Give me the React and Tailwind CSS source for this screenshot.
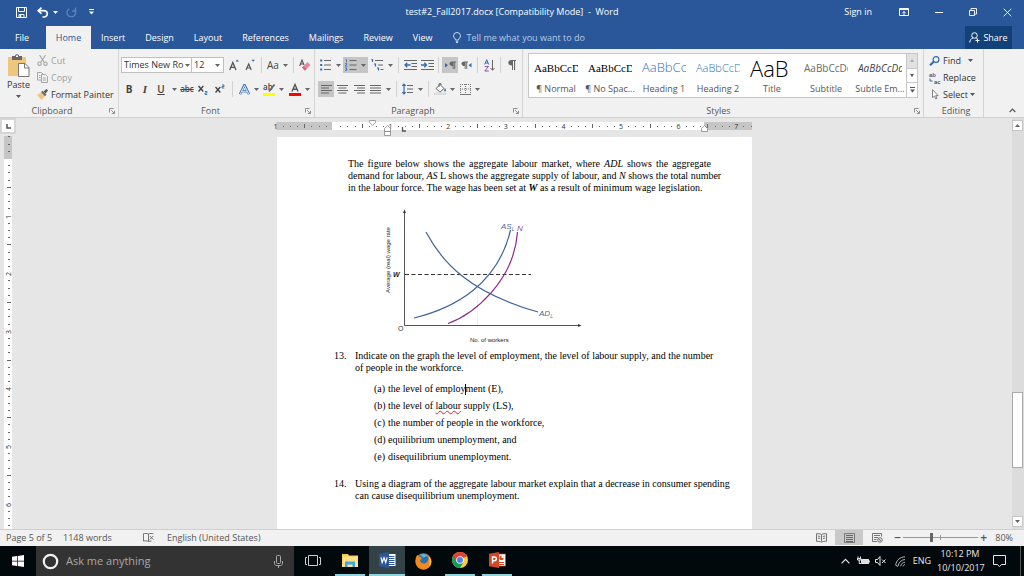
import React from "react";

const UI = "font-['Open_Sans','Noto_Sans',sans-serif]";

/* ---------- small shared pieces ---------- */

function Caret({ label, className = "w-[9px]" }) {
  return (
    <button aria-label={label} className={`flex h-4 shrink-0 items-center justify-center ${className}`}>
      <svg width="5" height="3" viewBox="0 0 5 3"><path d="M0 0h5L2.5 3z" fill="#666" /></svg>
    </button>
  );
}

function Tool({ label, className = "w-4", children }) {
  return (
    <button aria-label={label} className={`flex h-4 shrink-0 items-center justify-center ${className}`}>
      {children}
    </button>
  );
}

function Divider() {
  return <div className="mx-[3px] h-4 w-px shrink-0 bg-[#d2d2d2]" />;
}

function Launcher() {
  return (
    <button aria-label="More settings" className="absolute right-[3px] bottom-[3px]">
      <svg width="6" height="6" viewBox="0 0 6 6" fill="none" stroke="#777" strokeWidth=".8">
        <path d="M.5 4.5v-4h4M2.2 2.2l3 3M5.5 2.8v2.7H2.8" />
      </svg>
    </button>
  );
}

function Group({ title, className, launcher = true, children }) {
  return (
    <section aria-label={title} className={`relative flex shrink-0 flex-col border-r border-[#d4d4d4] ${className}`}>
      <div className="flex-1">{children}</div>
      <div className={`text-center leading-[13px] text-[#555] ${launcher ? "pr-[14px]" : ""}`}>{title}</div>
      {launcher && <Launcher />}
    </section>
  );
}

/* ---------- title bar and tabs ---------- */

function TitleBar() {
  return (
    <header className="grid h-[26px] shrink-0 grid-cols-[1fr_auto_1fr] items-center pb-[2px] text-white">
      <div className="flex items-center pl-4">
        <button aria-label="Save">
          <svg width="11" height="11" viewBox="0 0 11 11" fill="none" stroke="#fff">
            <path d="M.5.5h10v10H.5z" /><path d="M2.5.5v4h6v-4" /><path d="M3 10.5V7.5h5v3" /><path d="M4.5 8v2" strokeWidth="1.5" />
          </svg>
        </button>
        <button aria-label="Undo" className="ml-[10px]">
          <svg width="12" height="11" viewBox="0 0 12 11" fill="none" stroke="#fff" strokeWidth="1.7">
            <path d="M4.5.7L1.2 3.7l3.3 3" /><path d="M1.2 3.7h5.3c5 0 5 6.3.3 6.3H5.5" />
          </svg>
        </button>
        <button aria-label="Undo history" className="ml-1">
          <svg width="5" height="3" viewBox="0 0 5 3"><path d="M0 0h5L2.5 3z" fill="#fff" /></svg>
        </button>
        <button aria-label="Repeat" className="ml-2">
          <svg width="11" height="11" viewBox="0 0 11 11" fill="none" stroke="#5f83bb" strokeWidth="1.3">
            <path d="M3.3 1.7A4.3 4.3 0 1 0 8.5 2.6" /><path d="M6 4.2h3.6V.6" />
          </svg>
        </button>
        <button aria-label="Customize toolbar" className="ml-3">
          <svg width="5" height="6" viewBox="0 0 5 6" fill="#fff"><path d="M0 0h5v1H0zM0 2.6h5L2.5 5.6z" /></svg>
        </button>
      </div>
      <h1 className="text-[9px] whitespace-pre">test#2_Fall2017.docx [Compatibility Mode]  -  Word</h1>
      <div className="flex items-center justify-end pr-3">
        <button>Sign in</button>
        <button aria-label="Ribbon display options" className="ml-[27px]">
          <svg width="10" height="8" viewBox="0 0 10 8" fill="none" stroke="#fff">
            <path d="M.5.5h9v7h-9zM.5 1.5h9" /><path d="M5 7V3.5M3.3 5L5 3.5 6.7 5" strokeWidth=".9" />
          </svg>
        </button>
        <button aria-label="Minimize" className="ml-[26px]">
          <svg width="8" height="8" viewBox="0 0 8 8"><path d="M0 4h8v1H0z" fill="#fff" /></svg>
        </button>
        <button aria-label="Restore" className="ml-[26px]">
          <svg width="8" height="8" viewBox="0 0 8 8" fill="none" stroke="#fff" strokeWidth=".9">
            <path d="M.5 2.5h5v5h-5zM2 2.3V.5h5.5V6H5.8" />
          </svg>
        </button>
        <button aria-label="Close" className="ml-[26px]">
          <svg width="9" height="9" viewBox="0 0 9 9" stroke="#fff" strokeWidth=".9"><path d="M.7.7l7.6 7.6M8.3.7L.7 8.3" /></svg>
        </button>
      </div>
    </header>
  );
}

const tabs = ["Insert", "Design", "Layout", "References", "Mailings", "Review", "View"];

function Tabs() {
  return (
    <nav className="flex h-[23px] shrink-0 items-stretch text-white">
      <button className="w-[46px] pr-0.5">File</button>
      <button className="w-[45px] bg-[#f1f1f1] text-[#2a579a]">Home</button>
      {tabs.map((t) => <button key={t} className="px-[10px]">{t}</button>)}
      <label className="flex flex-1 items-center pl-[11px]">
        <svg width="8" height="11" viewBox="0 0 8 11" fill="none" stroke="#dbe5f3" strokeWidth=".9">
          <path d="M2.5 8C2.500 6.300.5 6 .5 3.800a3.500 3.300 0 0 1 7 0C7.500 6 5.500 6.300 5.500 8zM2.700 9.300h2.600M3 10.500h2" />
        </svg>
        <input aria-label="Tell me" placeholder="Tell me what you want to do" className="ml-[5px] w-40 bg-transparent outline-none placeholder:text-[#b8cae6]" />
      </label>
      <button className="mr-3 flex w-[47px] items-center justify-center gap-[3px] bg-[#124078]">
        <svg width="11" height="11" viewBox="0 0 11 11" fill="none" stroke="#fff">
          <circle cx="5.500" cy="3.500" r="2.800" /><path d="M.700 10.500c.3-2.500 1.600-4.200 3.300-4.700M6.800 6l.9.800M8.500 6.500v4M6.500 8.500h4" />
        </svg>
        Share
      </button>
    </nav>
  );
}

/* ---------- ribbon ---------- */

function ClipboardGroup() {
  return (
    <Group title="Clipboard" className="w-[119px]">
      <div className="flex pt-[3px]">
        <button className="flex w-[37px] flex-col items-center pt-[2px] text-[#333]">
          <svg width="23" height="24" viewBox="0 0 23 24">
            <path d="M1 3h18v19H1z" fill="#eec77c" />
            <path d="M5 2h3c0-2.500 4-2.500 4 0h3v4H5z" fill="#666" /><path d="M9 1.500h2v1.500H9z" fill="#fff" />
            <path d="M11.500 9.500h6.500l4 4v9H11.500z" fill="#fff" stroke="#777" /><path d="M17.500 9.500v4.500h4.500" fill="none" stroke="#777" />
          </svg>
          <span className="leading-[14px]">Paste</span>
          <svg className="mt-[3px]" width="5" height="3" viewBox="0 0 5 3"><path d="M0 0h5L2.500 3z" fill="#555" /></svg>
        </button>
        <div className="flex flex-col items-start text-[#a0a0a0]">
          <button className="flex h-[17px] items-center gap-[3px]">
            <svg width="11" height="11" viewBox="0 0 11 11" fill="none" stroke="#a6a6a6" strokeWidth="1.100">
              <path d="M2.500 0l4.600 7M8.500 0L3.900 7" /><circle cx="2.500" cy="8.700" r="1.700" /><circle cx="8.500" cy="8.700" r="1.700" />
            </svg>
            Cut
          </button>
          <button className="flex h-[17px] items-center gap-[3px]">
            <svg width="11" height="11" viewBox="0 0 11 11" fill="#f1f1f1" stroke="#a6a6a6">
              <path d="M.5.5h4l2 2v5.500h-6z" /><path d="M4.500 2.500h4l2 2v6h-6z" /><path d="M6 6h3M6 8h3M2 3.500h1.500M2 5.500h1.500" />
            </svg>
            Copy
          </button>
          <button className="flex h-[17px] items-center gap-[3px] text-[#333]">
            <svg width="11" height="11" viewBox="0 0 11 11">
              <path d="M0 6l4-2.500L8 7l-3.500 4z" fill="#eec77c" /><path d="M4 3l1.500-1.300 4 4L8 7.200z" fill="#666" /><path d="M6.500 2.500L9.500 0 11 1.500 8.600 4.600z" fill="#555" />
            </svg>
            Format Painter
          </button>
        </div>
      </div>
    </Group>
  );
}

function FontGroup() {
  return (
    <Group title="Font" className="w-[196px] pl-[2px]">
      <div className="mt-2 flex h-4 items-center">
        <div className="flex h-4 w-[71px] items-center border border-[#c0c0c0] bg-white">
          <input aria-label="Font" defaultValue="Times New Ro" className="w-[62px] pl-[2px] text-[#333] outline-none" />
          <Caret label="Font list" className="w-[7px]" />
        </div>
        <div className="flex h-4 w-8 items-center border border-l-0 border-[#c0c0c0] bg-white">
          <input aria-label="Font size" defaultValue="12" className="w-[21px] pl-[2px] text-[#333] outline-none" />
          <Caret label="Font size list" />
        </div>
        <Tool label="Grow font" className="ml-[2px] w-4">
          <svg width="10" height="12" viewBox="0 0 10 12"><path d="M.7 11L3.800 3.500 7 11M1.900 8.300h3.800" fill="none" stroke="#555" strokeWidth="1.300" /><path d="M6.500 2.500h3.500L8.200.5z" fill="#2f6bb0" /></svg>
        </Tool>
        <Tool label="Shrink font">
          <svg width="10" height="12" viewBox="0 0 10 12"><path d="M1 11L3.700 5l2.600 6M2 9h3.300" fill="none" stroke="#555" strokeWidth="1.200" /><path d="M6.500.7h3.500L8.200 2.700z" fill="#2f6bb0" /></svg>
        </Tool>
        <Divider />
        <Tool label="Change case" className="w-4 text-[10px] text-[#444]">Aa</Tool>
        <Caret label="Change case options" />
        <Divider />
        <Tool label="Clear formatting">
          <svg width="12" height="12" viewBox="0 0 12 12"><path d="M.7 7L3 1l2 5M1.500 5h3" fill="none" stroke="#555" strokeWidth="1.100" /><path d="M3 8.500L8.500 3 11.500 6 6 11.500z" fill="#e58a9a" /><path d="M4.500 7l3 3-1.500 1.500-3-3z" fill="#d8637a" /></svg>
        </Tool>
      </div>
      <div className="mt-2 flex h-4 items-center text-[#444]">
        <Tool label="Bold"><b className="text-[10px]">B</b></Tool>
        <Tool label="Italic"><i className="font-['Liberation_Serif',serif] text-[11px] font-bold">I</i></Tool>
        <Tool label="Underline"><span className="text-[10px] font-semibold underline">U</span></Tool>
        <Caret label="Underline options" className="w-[10px]" />
        <Tool label="Strikethrough"><span className="text-[8px] font-semibold line-through">abc</span></Tool>
        <Tool label="Subscript">
          <svg width="10" height="11" viewBox="0 0 10 11"><path d="M.5 2l4.800 5.500M5.300 2L.5 7.500" stroke="#444" strokeWidth="1.400" /><path d="M7 7.500h2V9H7v1.500h2.300" fill="none" stroke="#2f6bb0" strokeWidth=".9" /></svg>
        </Tool>
        <Tool label="Superscript" className="w-[18px]">
          <svg width="10" height="11" viewBox="0 0 10 11"><path d="M.5 3l4.800 5.500M5.300 3L.5 8.500" stroke="#444" strokeWidth="1.400" /><path d="M7 1h2v1.500H7V4h2.300" fill="none" stroke="#2f6bb0" strokeWidth=".9" /></svg>
        </Tool>
        <Divider />
        <Tool label="Text effects">
          <svg width="11" height="11" viewBox="0 0 11 11"><path d="M1 10.300L5.500.8 10 10.300M2.800 7.300h5.400" fill="none" stroke="#3f78bd" strokeWidth="2.400" /><path d="M1.300 10L5.500 1.500 9.700 10M2.800 7.300h5.400" fill="none" stroke="#fff" strokeWidth=".8" /></svg>
        </Tool>
        <Caret label="Text effect options" />
        <Tool label="Highlight colour">
          <svg width="13" height="13" viewBox="0 0 13 13"><path d="M0 10h12v3H0z" fill="#ff0" /><text x="0" y="7" fontSize="8" fontWeight="600" fill="#444">ab</text><path d="M6 8.500L11.500 1.500" stroke="#666" strokeWidth="1.800" /></svg>
        </Tool>
        <Caret label="Highlight options" />
        <Tool label="Font colour" className="w-[17px]">
          <svg width="12" height="13" viewBox="0 0 12 13"><path d="M0 10h12v3H0z" fill="#f00" /><path d="M3 8.500L6 1.500l3 7M4 6.300h4" fill="none" stroke="#555" strokeWidth="1.400" /></svg>
        </Tool>
        <Caret label="Font colour options" />
      </div>
    </Group>
  );
}

const lineSets = {
  left: "M0 .5h11M0 3h8M0 5.500h11M0 8h8",
  center: "M0 .5h11M1.500 3h8M0 5.500h11M1.500 8h8",
  right: "M0 .5h11M3 3h8M0 5.500h11M3 8h8",
  justify: "M0 .5h11M0 3h11M0 5.500h11M0 8h11",
};

function Lines({ kind }) {
  return <svg width="11" height="9" viewBox="0 0 11 9"><path d={lineSets[kind]} stroke="#666" strokeWidth="1" /></svg>;
}

function ParagraphGroup() {
  return (
    <Group title="Paragraph" className="w-[208px] pl-[3px]">
      <div className="mt-2 flex h-4 items-center">
        <Tool label="Bullets">
          <svg width="12" height="12" viewBox="0 0 12 12"><path d="M4 1.500h7M4 6h7M4 10.500h7" stroke="#666" /><path d="M.2.500h2v2h-2zM.2 5h2v2h-2zM.2 9.500h2v2h-2z" fill="#2f6bb0" /></svg>
        </Tool>
        <Caret label="Bullet options" />
        <div className="flex bg-[#c5c5c5]">
          <Tool label="Numbering">
            <svg width="12" height="12" viewBox="0 0 12 12" fill="none"><path d="M4.500 1.500h7M4.500 6h7M4.500 10.500h7" stroke="#666" /><path d="M.5.500h1v2.800M0 4.700h2L.3 7.200h2M0 9h2l-1 1 1 .2-.3 1.300H0" stroke="#2f6bb0" strokeWidth=".8" /></svg>
          </Tool>
          <Caret label="Numbering options" />
        </div>
        <Tool label="Multilevel list" className="w-[18px]">
          <svg width="13" height="12" viewBox="0 0 13 12" fill="none"><path d="M4 1.500h8M7 6h5M9.500 10.500h3" stroke="#666" /><path d="M.5.500h1v2.500M3 5h1.500v2.500M6 9h1.500v2.500" stroke="#2f6bb0" strokeWidth="1.200" /></svg>
        </Tool>
        <Caret label="Multilevel options" />
        <Divider />
        <Tool label="Decrease indent" className="w-[17px]">
          <svg width="13" height="10" viewBox="0 0 13 10" fill="none"><path d="M0 .5h13M7.500 3.500H13M7.500 6.500H13M0 9.500h13" stroke="#666" /><path d="M6.500 5H1M3.200 2.700L1 5l2.200 2.300" stroke="#2f6bb0" strokeWidth="1.300" /></svg>
        </Tool>
        <Tool label="Increase indent">
          <svg width="13" height="10" viewBox="0 0 13 10" fill="none"><path d="M0 .5h13M7.500 3.500H13M7.500 6.500H13M0 9.500h13" stroke="#666" /><path d="M0 5h5.500M3.300 2.700L5.500 5 3.300 7.300" stroke="#2f6bb0" strokeWidth="1.300" /></svg>
        </Tool>
        <Divider />
        <Tool label="Left to right" className="w-4 bg-[#c5c5c5]">
          <svg width="11" height="9" viewBox="0 0 11 9"><path d="M0 2l3 2.200L0 6.500z" fill="#2f6bb0" /><path d="M7.200.5H11v.9h-.8V8h-.9V1.400h-.7V8h-.9V5C3.500 5 3.500.5 7.200.5z" fill="#666" /></svg>
        </Tool>
        <Tool label="Right to left">
          <svg width="11" height="9" viewBox="0 0 11 9"><path d="M10.500 2l-3 2.200 3 2.300z" fill="#2f6bb0" /><path d="M3.200.5H7v.9h-.8V8h-.9V1.400h-.7V8h-.9V5C-.5 5-.5.5 3.200.5z" fill="#666" /></svg>
        </Tool>
        <Divider />
        <Tool label="Sort">
          <svg width="11" height="13" viewBox="0 0 11 13" fill="none"><path d="M.7 5.500L2.700.7l2 4.800M1.400 4h2.600" stroke="#2f6bb0" /><path d="M.8 7.500h3.700L.8 12h4" stroke="#8a4fa5" /><path d="M8.500 1v10M6.500 9l2 2.300 2-2.300" stroke="#666" /></svg>
        </Tool>
        <Divider />
        <Tool label="Show marks">
          <svg width="8" height="10" viewBox="0 0 8 10"><path d="M3.500 0H8v1h-.9v9H6V1H5v9H4V5.500C-.8 5.500-.8 0 3.500 0z" fill="#666" /></svg>
        </Tool>
      </div>
      <div className="mt-2 flex h-4 items-center">
        <Tool label="Align left" className="w-4 bg-[#c5c5c5]"><Lines kind="left" /></Tool>
        <Tool label="Center" className="w-[17px]"><Lines kind="center" /></Tool>
        <Tool label="Align right"><Lines kind="right" /></Tool>
        <Tool label="Justify" className="w-[17px]"><Lines kind="justify" /></Tool>
        <Caret label="Justify options" />
        <Divider />
        <Tool label="Line spacing">
          <svg width="12" height="12" viewBox="0 0 12 12" fill="none"><path d="M5 2.500h6M5 6h6M5 9.500h6" stroke="#666" /><path d="M2 1v10M.3 2.800L2 1l1.700 1.800M.3 9.200L2 11l1.700-1.800" stroke="#2f6bb0" strokeWidth="1.200" /></svg>
        </Tool>
        <Caret label="Spacing options" />
        <Divider />
        <Tool label="Shading">
          <svg width="13" height="12" viewBox="0 0 13 12"><path d="M2 5.500L6 1.500l4 4-4 3.700z" fill="#fff" stroke="#666" /><path d="M5 4V.7h2V2" fill="none" stroke="#666" /><path d="M11 5c1.500 2 1 3.500 0 3.500S9.800 7 11 5z" fill="#2f6bb0" /><path d="M.5 10.200h11v1.500H.5z" fill="#fff" stroke="#aaa" strokeWidth=".5" /></svg>
        </Tool>
        <Caret label="Shading options" />
        <Tool label="Borders">
          <svg width="11" height="11" viewBox="0 0 11 11" fill="none" stroke="#777"><path d="M.5 0v10M5.500 0v10M10.500 0v10M0 .5h11M0 5h11" strokeDasharray="1 1" /><path d="M0 10.500h11" /></svg>
        </Tool>
        <Caret label="Border options" />
      </div>
    </Group>
  );
}

const styles = [
  { name: "¶ Normal", sample: "AaBbCcDd", look: "font-['Liberation_Serif',serif] text-[11px] text-black" },
  { name: "¶ No Spac...", sample: "AaBbCcDd", look: "font-['Liberation_Serif',serif] text-[11px] text-black" },
  { name: "Heading 1", sample: "AaBbCcDd", look: "font-light text-[13px] text-[#2e74b5]" },
  { name: "Heading 2", sample: "AaBbCcDd", look: "font-light text-[11px] text-[#2e74b5]" },
  { name: "Title", sample: "AaB", look: "font-light text-[22px] text-black" },
  { name: "Subtitle", sample: "AaBbCcDd", look: "text-[10px] text-[#6a6a6a]" },
  { name: "Subtle Em...", sample: "AaBbCcDd", look: "italic text-[10px] text-[#404040]" },
];

function StylesGroup() {
  return (
    <Group title="Styles" className="min-w-0 flex-1 pl-[5px]">
      <div className="mt-1 mr-[5px] flex h-[45px] border border-[#c6c6c6] bg-white">
        <div className="flex flex-1 overflow-hidden">
          {styles.map((s) => (
            <button key={s.name} className="flex w-[54px] shrink-0 flex-col items-center text-[#555]">
              <span className={`flex h-[28px] w-[44px] items-center overflow-hidden whitespace-nowrap ${s.look}`}>{s.sample}</span>
              <span className="leading-[13px] whitespace-nowrap">{s.name}</span>
            </button>
          ))}
        </div>
        <div className="flex w-[11px] flex-col divide-y divide-[#c6c6c6] border-l border-[#c6c6c6]">
          <button aria-label="Scroll up" className="flex flex-1 items-center justify-center bg-[#e1e1e1]"><svg width="4" height="3" viewBox="0 0 4 3"><path d="M0 3h4L2 0z" fill="#aaa" /></svg></button>
          <button aria-label="Scroll down" className="flex flex-1 items-center justify-center"><svg width="4" height="3" viewBox="0 0 4 3"><path d="M0 0h4L2 3z" fill="#555" /></svg></button>
          <button aria-label="All styles" className="flex flex-1 items-center justify-center"><svg width="5" height="6" viewBox="0 0 5 6"><path d="M0 0h5v1H0zM0 2.500h5L2.500 5.500z" fill="#555" /></svg></button>
        </div>
      </div>
    </Group>
  );
}

function EditingGroup() {
  return (
    <Group title="Editing" className="w-[60px] pl-[5px]" launcher={false}>
      <div className="flex flex-col items-start pt-[3px] text-[#333]">
        <button className="flex h-[17px] items-center gap-[3px]">
          <svg width="11" height="10" viewBox="0 0 11 10" fill="none" stroke="#2f6bb0"><circle cx="7" cy="3.500" r="2.900" strokeWidth="1.200" /><path d="M4.700 5.700L1 9.300" strokeWidth="2" /></svg>
          Find
          <svg className="ml-[4px]" width="5" height="3" viewBox="0 0 5 3"><path d="M0 0h5L2.500 3z" fill="#555" /></svg>
        </button>
        <button className="flex h-[17px] items-center gap-[2px]">
          <svg width="12" height="14" viewBox="0 0 12 14" fontFamily="Liberation Sans, sans-serif" fontSize="6" fontWeight="700"><text x="0" y="5.500" fill="#555">a<tspan fill="#8a4fa5">b</tspan></text><text x="5" y="12.500" fill="#555">a<tspan fill="#2f6bb0">c</tspan></text><path d="M1 7.500V10h2.500" fill="none" stroke="#2f6bb0" /></svg>
          Replace
        </button>
        <button className="flex h-[17px] items-center gap-[3px]">
          <svg width="11" height="11" viewBox="0 0 11 11"><path d="M3.500.7v8l2-1.700 1.300 3 1.200-.6L6.700 6.600h2.500z" fill="#fff" stroke="#777" strokeWidth=".9" /></svg>
          Select
          <svg className="-ml-px" width="5" height="3" viewBox="0 0 5 3"><path d="M0 0h5L2.500 3z" fill="#555" /></svg>
        </button>
      </div>
    </Group>
  );
}

function Ribbon() {
  return (
    <div className="flex h-[69px] shrink-0 border-b border-[#d0d0d0] bg-[#f1f1f1]">
      <ClipboardGroup />
      <FontGroup />
      <ParagraphGroup />
      <StylesGroup />
      <EditingGroup />
      <div className="flex w-10 items-end justify-end pr-2 pb-1">
        <button aria-label="Collapse ribbon"><svg width="7" height="5" viewBox="0 0 7 5"><path d="M.7 4l2.800-2.800L6.300 4" fill="none" stroke="#555" strokeWidth="1.200" /></svg></button>
      </div>
    </div>
  );
}

/* ---------- rulers ---------- */

const INCH = 57.6;

function tickMarks(from, to) {
  const out = [];
  for (let i = from; i <= to; i++) if (i % 8 !== 0) out.push({ i, at: (i * INCH) / 8, half: i % 4 === 0 });
  return out;
}

function HorizontalRuler() {
  return (
    <svg aria-hidden="true" className="mx-auto block shrink-0 overflow-visible" width="477" height="19" viewBox="-57 0 477 19">
      <path d="M-57 4H-1v8h-56z" fill="#c6c6c6" /><path d="M-1 4h372v8H-1z" fill="#fff" /><path d="M371 4h48v8h-48z" fill="#c6c6c6" />
      {tickMarks(-7, 58).map((t) => <rect key={t.i} x={Math.round(t.at)} y={t.half ? 6 : 8} width="1" height={t.half ? 4 : 1} fill="#666" />)}
      {[-1, 1, 2, 3, 4, 5, 6, 7].map((n) => <text key={n} x={n * INCH} y="11" textAnchor="middle" fontSize="7" fill="#333">{Math.abs(n)}</text>)}
      <path d="M36.500 2.500h6v2l-3 3-3-3z" fill="#fff" stroke="#888" strokeWidth=".8" />
      <path d="M51.500 13.500v-3l3-3 3 3v3zM51.500 13.500h6v4h-6z" fill="#fff" stroke="#888" strokeWidth=".8" />
      <path d="M69.500 9v4h3.500" fill="none" stroke="#555" strokeWidth="1.300" />
      <path d="M368.500 13.500v-3l3-3 3 3v3z" fill="#fff" stroke="#888" strokeWidth=".8" />
    </svg>
  );
}

function VerticalRuler() {
  return (
    <svg aria-hidden="true" className="ml-1 block shrink-0" width="8" height="412" viewBox="0 -23 8 412">
      <path d="M0-23h8V0H0z" fill="#c6c6c6" /><path d="M0 0h8v400H0z" fill="#fff" />
      {tickMarks(-3, 60).map((t) => <rect key={t.i} x={t.half ? 3 : 4} y={Math.round(t.at) - 1} width={t.half ? 4 : 2} height="1" fill="#666" />)}
      {[1, 2, 3, 4, 5, 6].map((n) => <text key={n} transform={`translate(7 ${Math.round(n * INCH)}) rotate(-90)`} textAnchor="middle" fontSize="7" fill="#333">{n}</text>)}
    </svg>
  );
}

/* ---------- document ---------- */

function Figure() {
  return (
    <svg role="img" aria-label="Aggregate labour market" className="mt-[6px] ml-9 block" width="220" height="145" viewBox="370 200 220 145" fontFamily="Liberation Sans, sans-serif">
      <path d="M404.500 211v114.500H580" fill="none" stroke="#555" />
      <path d="M403 213l1.500-3.500 1.500 3.500zM578 324l3.500 1.500-3.500 1.500z" fill="#333" />
      <path d="M405 274.500h126" stroke="#333" strokeDasharray="4 2.500" />
      <path d="M477.500 287v38" stroke="#f0f0f0" />
      <g fill="none" strokeWidth="1.200">
        <path d="M426 232C442 262 468 292 538 312" stroke="#3f6496" />
        <path d="M414 318C455 308 498 284 510.500 230" stroke="#3f6496" />
        <path d="M448 323.500C474 314 514 281 517.500 232" stroke="#8c2a8c" />
      </g>
      <g fontSize="8" fontStyle="italic">
        <text x="501" y="229" fill="#4a6d9e">AS<tspan fontSize="5" dy="2">L</tspan></text>
        <text x="517" y="231" fill="#9c479c">N</text>
        <text x="539" y="316" fill="#4a6d9e">AD<tspan fontSize="5" dy="2">L</tspan></text>
      </g>
      <text x="393" y="277" fontSize="7" fontStyle="italic" fontWeight="700" fill="#222">W</text>
      <text x="398" y="331" fontSize="7" fill="#333">O</text>
      <text x="470" y="342" fontSize="6" fill="#222">No. of workers</text>
      <text transform="translate(389.500 293) rotate(-90)" fontSize="6" fill="#222">Average (real) wage rate</text>
    </svg>
  );
}

function Full({ children }) {
  return <span className="block text-justify whitespace-nowrap [text-align-last:justify]">{children}</span>;
}

const parts = [
  ["(a)", <>the level of employ<span className="-mr-px inline-block h-[11px] w-px bg-black align-middle" />ment (E),</>],
  ["(b)", <>the level of <span className="underline decoration-[#d22] decoration-wavy decoration-1">labour</span> supply (LS),</>],
  ["(c)", "the number of people in the workforce,"],
  ["(d)", "equilibrium unemployment, and"],
  ["(e)", "disequilibrium unemployment."],
];

function Page() {
  return (
    <article className="mx-auto min-h-0 w-[475px] flex-1 overflow-hidden bg-white pt-[21px] pr-[41px] pl-[57px] font-['Liberation_Serif',serif] text-[10px] leading-[12px] whitespace-nowrap text-black">
      <p className="ml-[14px]">
        <Full>The figure below shows the aggregate labour market, where <i>ADL</i> shows the aggregate</Full>
        <Full>demand for labour, <i>AS</i> L shows the aggregate supply of labour, and <i>N</i> shows the total number</Full>
        in the labour force. The wage has been set at <b><i>W</i></b> as a result of minimum wage legislation.
      </p>
      <Figure />
      <div className="mt-[5px] grid grid-cols-[21px_1fr]">
        <span>13.</span>
        <p>
          <Full>Indicate on the graph the level of employment, the level of labour supply, and the number</Full>
          of people in the workforce.
        </p>
      </div>
      <ul className="mt-[6px] ml-10 leading-[17px]">
        {parts.map(([n, text]) => (
          <li key={n} className="grid grid-cols-[14px_1fr]"><span>{n}</span><span>{text}</span></li>
        ))}
      </ul>
      <div className="mt-[13px] grid grid-cols-[21px_1fr]">
        <span>14.</span>
        <p>
          Using a diagram of the aggregate labour market explain that a decrease in consumer spending<br />
          can cause disequilibrium unemployment.
        </p>
      </div>
    </article>
  );
}

function ScrollBar() {
  return (
    <div className="flex w-[12px] shrink-0 flex-col bg-[#dcdcdc] pt-[2px] pr-px pb-[2px]">
      <button aria-label="Scroll up" className="flex h-[11px] items-center justify-center border border-[#c6c6c6] bg-white"><svg width="5" height="3" viewBox="0 0 5 3"><path d="M0 3h5L2.500 0z" fill="#666" /></svg></button>
      <div className="flex-[264]" />
      <div className="flex-[74] border border-[#ababab] bg-white" />
      <div className="flex-[49]" />
      <button aria-label="Scroll down" className="flex h-[11px] items-center justify-center border border-[#c6c6c6] bg-white"><svg width="5" height="3" viewBox="0 0 5 3"><path d="M0 0h5L2.500 3z" fill="#666" /></svg></button>
    </div>
  );
}

function Workspace() {
  return (
    <main className="flex min-h-0 flex-1 bg-[#e6e6e6]">
      <div className="flex w-[17px] shrink-0 flex-col overflow-hidden">
        <button aria-label="Tab selector" className="mb-[2px] flex h-[16px] w-4 shrink-0 items-center justify-center border-2 border-[#d6d6d6] bg-white">
          <svg width="5" height="5" viewBox="0 0 5 5"><path d="M1 0v4h4" fill="none" stroke="#555" strokeWidth="1.500" /></svg>
        </button>
        <VerticalRuler />
      </div>
      <div className="flex min-w-0 flex-1 flex-col"><HorizontalRuler /><Page /></div>
      <ScrollBar />
    </main>
  );
}

/* ---------- status bar and taskbar ---------- */

function StatusBar() {
  return (
    <footer className="flex h-[17px] shrink-0 items-center border-t border-[#cfcfcf] bg-[#f1f1f1] pr-[11px] pb-px pl-[6px] text-[#555]">
      <span className="w-[57px]">Page 5 of 5</span>
      <span className="w-[80px]">1148 words</span>
      <button aria-label="Proofing errors" className="w-6">
        <svg width="11" height="9" viewBox="0 0 11 9" fill="none" stroke="#666" strokeWidth=".9"><path d="M5.500 8.500V1C4 .3 2 .3.500.7v7.400c2-.4 3.500-.3 5 .4 1-.4 2-.5 3-.5M5.500 1c1.500-.7 3.500-.7 5-.3M6.800 3l3.500 3.500M10.300 3L6.800 6.500" /></svg>
      </button>
      <span className="flex-1">English (United States)</span>
      <button aria-label="Read mode" className="flex h-full w-7 items-center justify-center">
        <svg width="11" height="10" viewBox="0 0 11 10" fill="none" stroke="#666" strokeWidth=".9"><path d="M5.500 8.500V1.500C4 .7 2 .5.500.7v7.600c2 0 3.500 0 5 .9 1.500-.9 3-.9 5-.9V.7c-1.500-.2-3.500 0-5 .8M1.800 3l2.400.5M1.800 5l2.400.5M9.200 3l-2.400.5M9.200 5l-2.400.5" /></svg>
      </button>
      <button aria-label="Print layout" className="flex h-full w-7 items-center justify-center bg-[#c9c9c9]">
        <svg width="11" height="10" viewBox="0 0 11 10" stroke="#666"><path d="M.5.500h10v9H.5z" fill="none" strokeWidth=".8" /><path d="M2 2.500h7M2 4.500h7M2 6.500h7M2 8.500h7" /></svg>
      </button>
      <button aria-label="Web layout" className="flex h-full w-7 items-center justify-center">
        <svg width="11" height="10" viewBox="0 0 11 10" fill="none" stroke="#666" strokeWidth=".9"><path d="M5 8.500H.5V.500h9v3M2 2.500h6M2 4.500h4M2 6.500h2.500" /><circle cx="8" cy="7" r="2.300" /><path d="M6.500 6l2 1-.5 1.500" /></svg>
      </button>
      <button aria-label="Zoom out" className="ml-[3px] text-[12px] leading-3 font-semibold">−</button>
      <input
        type="range" aria-label="Zoom" min="0" max="100" defaultValue="38"
        className="mx-[2px] h-[9px] w-[75px] appearance-none bg-[image:linear-gradient(#999,#999),linear-gradient(#999,#999)] bg-[length:100%_1px,1px_5px] bg-center bg-no-repeat [&::-webkit-slider-thumb]:h-[9px] [&::-webkit-slider-thumb]:w-[3px] [&::-webkit-slider-thumb]:appearance-none [&::-webkit-slider-thumb]:bg-[#666]"
      />
      <button aria-label="Zoom in" className="text-[12px] leading-3 font-semibold">+</button>
      <button className="w-[26px] text-right">80%</button>
    </footer>
  );
}

function TaskButton({ label, className, children }) {
  return <button aria-label={label} className={`flex h-full items-center justify-center ${className}`}>{children}</button>;
}

function TaskBar() {
  return (
    <footer className="flex h-[30px] shrink-0 items-center bg-[#01090c] text-[#e8e8e8]">
      <TaskButton label="Start" className="w-9">
        <svg width="12" height="12" viewBox="0 0 12 12" fill="#fff"><path d="M0 1.700L5 1v4.700H0zM5.700.9L12 0v5.700H5.700zM0 6.400h5V11l-5-.7zM5.700 6.400H12V12l-6.300-.9z" /></svg>
      </TaskButton>
      <label className="flex h-full w-[258px] items-center bg-[#333] pr-[10px] pl-[6px]">
        <svg width="17" height="17" viewBox="0 0 17 17"><circle cx="8.500" cy="8.500" r="6.700" fill="none" stroke="#f2f2f2" strokeWidth="2.200" /></svg>
        <input aria-label="Search" placeholder="Ask me anything" className="ml-[7px] min-w-0 flex-1 bg-transparent text-[11px] outline-none placeholder:text-[#a8a8a8]" />
        <svg width="11" height="13" viewBox="0 0 11 13" fill="none" stroke="#aaa"><rect x="3.500" y=".5" width="4" height="8" rx="1" /><path d="M1.500 6v2.500c0 1 .7 2 2 2h4c1.300 0 2-1 2-2V6M5.500 10.500V13" /></svg>
      </label>
      <TaskButton label="Task view" className="w-[37px]">
        <svg width="16" height="12" viewBox="0 0 16 12" fill="none" stroke="#ccc"><path d="M3.500.5h9v10h-9zM2 2.500H.5v7H2M14 2.500h1.500v7H14" /></svg>
      </TaskButton>
      <TaskButton label="File Explorer" className="mx-1 w-[30px] border-b-2 border-[#8cd4dc]">
        <svg width="16" height="15" viewBox="0 0 16 15"><path d="M0 1h6l1 1.500h9V14H0z" fill="#f4c94f" /><path d="M1 3.500h15V14H0z" fill="#fce28c" /><path d="M3 14V8.500h10V14h-2.500v-2.500h-5V14z" fill="#42a8dc" /></svg>
      </TaskButton>
      <TaskButton label="Word" className="w-9 border-b-2 border-[#8cd4dc] bg-[#334247]">
        <svg width="17" height="16" viewBox="0 0 17 16"><path d="M8 2h8.500v12H8z" fill="#fff" /><path d="M9.500 4.500h6M9.500 6.500h6M9.500 8.500h6M9.500 10.500h6M9.500 12.500h6" stroke="#2b579a" /><path d="M0 1.700L10 0v16L0 14.300z" fill="#2b579a" /><path d="M2 5.300l1.200 5.200L5 5.700l1.700 4.800 1.400-5.200" fill="none" stroke="#fff" strokeWidth="1.200" /></svg>
      </TaskButton>
      <TaskButton label="Firefox" className="w-[37px]">
        <svg width="17" height="17" viewBox="0 0 17 17"><circle cx="8.500" cy="8.500" r="8.200" fill="#e66a1a" /><circle cx="8.500" cy="6.500" r="5.800" fill="#2a6fb3" /><path d="M5 1.800c4-2 7-.3 8.500 2-2-.8-4 0-5 1z" fill="#56b4e6" /><path d="M1 4c1-1.500 1.500-2 2-2 .3 1.200 1 1.700 2.300 2 1.300.3 1.700 1.200.8 2.300L5 7.500c.5 3.500 5 3.800 7 1.500 1.500-1.700 1.700-4 1.300-6 3.500 3 3.700 7.500 1 10.800-3 3.400-8.500 3.300-11.300.2C.5 11 .2 7 1 4z" fill="#f08a1d" /><path d="M13.300 3c3.300 3 3.500 7 1 10.500C15 10 15 6.500 13.300 3z" fill="#fcd54b" /></svg>
      </TaskButton>
      <TaskButton label="Chrome" className="mx-[3px] w-[30px] border-b-2 border-[#8cd4dc]">
        <svg width="16" height="16" viewBox="0 0 16 16"><circle cx="8" cy="8" r="8" fill="#fc3" /><path d="M8 8L1.100 4A8 8 0 0 1 14.900 4z" fill="#dc4437" /><path d="M8 8L1.100 4A8 8 0 0 0 8 16l3.500-6z" fill="#149b56" /><path d="M8 4.200h7L14.900 4A8 8 0 0 0 1.100 4l3.600 6z" fill="#dc4437" /><circle cx="8" cy="8" r="3.800" fill="#fff" /><circle cx="8" cy="8" r="3" fill="#4886ee" /></svg>
      </TaskButton>
      <TaskButton label="PowerPoint" className="mx-1 w-[30px] border-b-2 border-[#8cd4dc]">
        <svg width="17" height="16" viewBox="0 0 17 16"><path d="M8 2h8.500v12H8z" fill="#fff" stroke="#d24726" strokeWidth=".7" /><circle cx="12.500" cy="6" r="2.300" fill="#d24726" /><path d="M12.500 6V3.500A2.500 2.500 0 0 1 15 6z" fill="#fff" /><path d="M10 10.500h5M10 12.500h5" stroke="#d24726" /><path d="M0 1.700L10 0v16L0 14.300z" fill="#d24726" /><path d="M3.500 11.500V5h2c2.500 0 2.500 3.700 0 3.700h-2" fill="none" stroke="#fff" strokeWidth="1.400" /></svg>
      </TaskButton>
      <div className="ml-auto flex h-full items-center">
        <button aria-label="Hidden icons"><svg width="9" height="6" viewBox="0 0 9 6"><path d="M.6 5.300l3.900-4 3.900 4" fill="none" stroke="#e8e8e8" strokeWidth="1.200" /></svg></button>
        <svg aria-label="Battery" className="ml-[7px]" width="13" height="10" viewBox="0 0 13 10"><path d="M4.500 3.500h7v4h-7z" fill="#ddd" stroke="#e8e8e8" /><path d="M12.300 4.500v2M1 .5v2M3.500.5v2M.5 2.500h3.500v1.500H.5zM2.200 4v3.500H4" fill="none" stroke="#e8e8e8" /></svg>
        <svg aria-label="Muted" className="ml-[5px]" width="11" height="10" viewBox="0 0 11 10" fill="none" stroke="#e8e8e8"><path d="M.5 3.500h2l2.500-3v9l-2.500-3h-2zM7 3.500l3.500 3.500M10.500 3.500L7 7" /></svg>
        <svg aria-label="Wi-Fi" className="ml-[9px]" width="11" height="11" viewBox="0 0 11 11" fill="none" stroke="#ccc"><path d="M.7 9.500C1 4.500 5 1 10 .8M3.200 10C3.500 6.500 6.300 3.800 10 3.500M5.700 10.300C6 8 7.700 6.400 10 6.200M1 9.500l2 1M8.200 10.300c0-1 .8-1.700 1.800-1.800" strokeWidth=".9" /></svg>
        <span className="ml-[7px]">ENG</span>
        <time className="ml-[6px] w-[46px] text-center text-[9px] leading-[14px] whitespace-nowrap">10:12 PM<br />10/10/2017</time>
        <button aria-label="Notifications" className="ml-[10px]"><svg width="13" height="13" viewBox="0 0 13 13" fill="none" stroke="#e8e8e8"><path d="M.5.500h12v9H8.500L6.500 11.700 4.500 9.500h-4z" /></svg></button>
        <div className="mr-[3px] ml-[14px] h-full w-px bg-[#555]" />
      </div>
    </footer>
  );
}

export default function App() {
  return (
    <div className={`flex h-screen min-w-0 flex-col overflow-hidden bg-[#2a579a] text-[9px] ${UI}`}>
      <TitleBar />
      <Tabs />
      <Ribbon />
      <Workspace />
      <StatusBar />
      <TaskBar />
    </div>
  );
}
